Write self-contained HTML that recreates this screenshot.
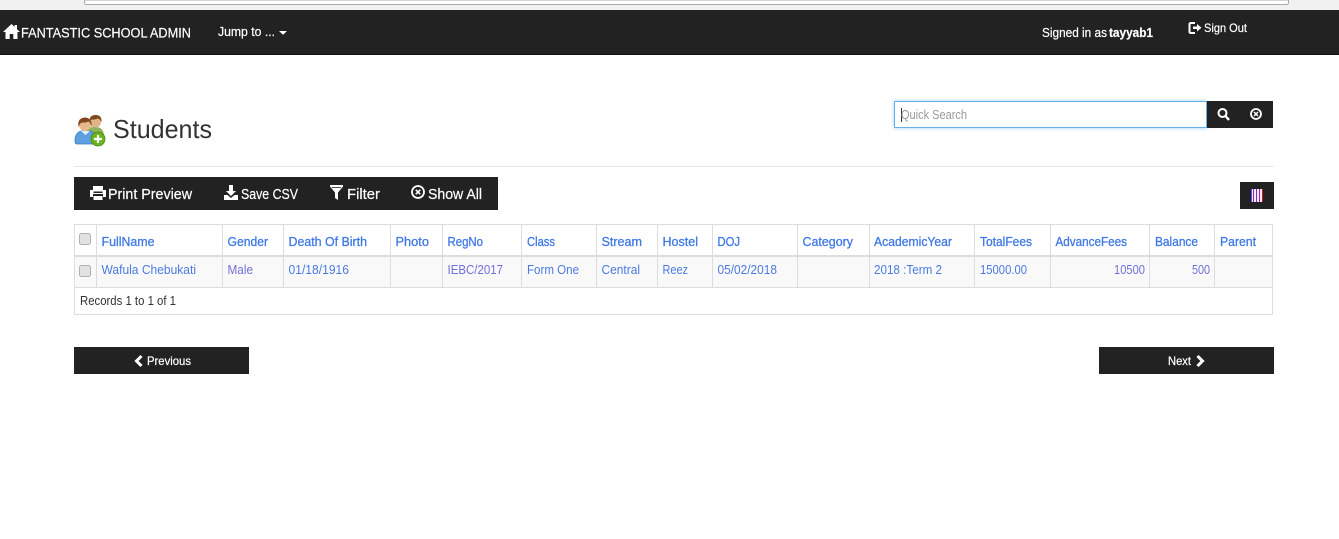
<!DOCTYPE html>
<html lang="en">
<head>
<meta charset="utf-8">
<title>Students</title>
<style>
html,body{margin:0;padding:0;background:#fff;width:1339px;height:539px;overflow:hidden}
svg{display:block}
text{font-family:"Liberation Sans",Arial,sans-serif}
.w{fill:#fff;stroke:#fff;stroke-width:.2px}
.th{fill:#3f78e6;stroke:#3f78e6;stroke-width:.3px;font-size:13px}
.td{fill:#4a7ae0;font-size:12.5px}
.tdv{fill:#6f6fd8;font-size:12.5px}
.ln{stroke:#ddd;stroke-width:1}
</style>
</head>
<body>
<svg width="1339" height="539" viewBox="0 0 1339 539" xmlns="http://www.w3.org/2000/svg">
<!-- browser strip -->
<rect width="1339" height="10" fill="#f1f1f1"/>
<path d="M84.500 0v2.500q0 2 2 2H1286.500q2 0 2-2V0z" fill="#fff" stroke="#aaa"/>
<!-- navbar -->
<rect y="10" width="1339" height="45" fill="#222"/>
<rect y="54" width="1339" height="1" fill="#111"/>
<path d="M11.500 24L3 32h2.500v7h4.200v-5h3.600v5h4.200v-7H20l-3-2.800V25h-2.400v1.900z" fill="#fff"/>
<text class="w" x="21" y="37.500" font-size="14" textLength="170" lengthAdjust="spacingAndGlyphs">FANTASTIC SCHOOL ADMIN</text>
<text class="w" x="218" y="36" font-size="13" textLength="57" lengthAdjust="spacingAndGlyphs">Jump to ...</text>
<path d="M279 31h8l-4 3.800z" fill="#fff"/>
<text class="w" x="1042" y="37" font-size="13" textLength="65" lengthAdjust="spacingAndGlyphs">Signed in as</text>
<text class="w" x="1109" y="37" font-size="13" font-weight="bold" textLength="44" lengthAdjust="spacingAndGlyphs">tayyab1</text>
<path d="M1195 23h-4q-1.500 0-1.500 1.500v7q0 1.500 1.500 1.500h4" fill="none" stroke="#fff" stroke-width="2"/>
<path d="M1193 26.500h4V24l4.500 3.800-4.500 3.700v-2.500h-4z" fill="#fff"/>
<text class="w" x="1204" y="32" font-size="12" textLength="43" lengthAdjust="spacingAndGlyphs">Sign Out</text>

<!-- heading icon -->
<g>
<path d="M84 136q1-9 9-9h3q7 0 8 8v5H88z" fill="#8fb35a"/>
<circle cx="95.500" cy="122" r="5.500" fill="#e0b488"/>
<path d="M89.500 122q-.5-7 6-7t6 7q-2-3.500-4-3.500-3 1.500-6 1-1.500 1-2 2.500z" fill="#7d4a1e"/>
<path d="M75 141q0-9 7-10h7q8 1 8 10 0 3-2 3H77q-2 0-2-3z" fill="#5d9fe0" stroke="#3a78bd" stroke-width=".8"/>
<path d="M81 131l4.500 4 4.500-4z" fill="#dff0ff"/>
<circle cx="85" cy="125" r="6" fill="#e6b98d"/>
<path d="M78.500 127q-1.500-9 6.500-9.500 7.500.5 6.500 9.500-1-4.500-3-5.500-3 1.500-7 1-2 1.500-3 4.500z" fill="#80481c"/>
<circle cx="98" cy="139" r="7" fill="#6cb31f" stroke="#4b8a12" stroke-width=".8"/>
<path d="M94 139h8M98 135v8" stroke="#fff" stroke-width="2.200"/>
</g>
<text x="113" y="138" font-size="26" fill="#333" textLength="99" lengthAdjust="spacingAndGlyphs">Students</text>

<!-- search -->
<rect x="894.500" y="101.500" width="312" height="26" fill="#fff" stroke="#66afe9" style="filter:drop-shadow(0 0 2px rgba(102,175,233,.6))"/>
<rect x="901" y="108" width="1" height="14" fill="#333"/>
<text x="901" y="119" font-size="12.500" fill="#999" textLength="66" lengthAdjust="spacingAndGlyphs">Quick Search</text>
<rect x="1207" y="101" width="66" height="27" fill="#222"/>
<circle cx="1222.500" cy="113" r="4" fill="none" stroke="#fff" stroke-width="2"/>
<path d="M1225.500 116l3.500 4" stroke="#fff" stroke-width="2.400"/>
<circle cx="1256" cy="114" r="5" fill="none" stroke="#fff" stroke-width="1.800"/>
<path d="M1254 112l4 4M1258 112l-4 4" stroke="#fff" stroke-width="1.500"/>

<rect x="74" y="166" width="1200" height="1" fill="#e6e6e6"/>

<!-- toolbar -->
<rect x="74" y="177" width="424" height="33" fill="#222"/>
<path d="M93 186h10v4h3v7h-3v-3H93v3h-3v-7h3z" fill="#fff"/>
<path d="M93.500 196h9v4h-9z" fill="#fff"/>
<rect x="93.500" y="191.500" width="9" height="1.500" fill="#222"/>
<text class="w" x="108" y="199" font-size="15" textLength="84" lengthAdjust="spacingAndGlyphs">Print Preview</text>
<path d="M229 185h4v6h3l-5 5-5-5h3z" fill="#fff"/>
<path d="M224 195h3.500l3.500 3 3.500-3h3.500v5h-14z" fill="#fff"/>
<text class="w" x="241" y="199" font-size="15" textLength="57" lengthAdjust="spacingAndGlyphs">Save CSV</text>
<path d="M330 185h13v1.500l-5 6v7.500l-3-2v-5.500l-5-6z" fill="#fff"/>
<path d="M332 187.500h9" stroke="#222" stroke-width=".8"/>
<text class="w" x="347" y="199" font-size="15" textLength="33" lengthAdjust="spacingAndGlyphs">Filter</text>
<circle cx="418" cy="192" r="6" fill="none" stroke="#fff" stroke-width="1.800"/>
<path d="M415.800 189.800l4.400 4.400M420.200 189.800l-4.400 4.400" stroke="#fff" stroke-width="1.600"/>
<text class="w" x="428" y="199" font-size="15" textLength="54" lengthAdjust="spacingAndGlyphs">Show All</text>

<!-- columns button -->
<rect x="1240" y="182" width="34" height="27" fill="#222"/>
<rect x="1251" y="189" width="12" height="13" fill="#f4e6fa"/>
<rect x="1251" y="189" width="1" height="13" fill="#4a4af0"/>
<rect x="1253" y="189" width="1" height="13" fill="#8a2aa8"/>
<rect x="1256" y="189" width="1" height="13" fill="#8a2aa8"/>
<rect x="1259" y="189" width="1" height="13" fill="#8a2aa8"/>
<rect x="1262" y="189" width="1" height="13" fill="#c02020"/>

<!-- table -->
<rect x="74.500" y="224.500" width="1198" height="90" fill="#fff" stroke="#ddd"/>
<rect x="75" y="257" width="1197" height="30" fill="#f9f9f9"/>
<rect x="75" y="255" width="1197" height="2" fill="#ddd"/>
<rect x="75" y="287" width="1197" height="1" fill="#ddd"/>
<path class="ln" d="M96.500 225V287M222.500 225V287M283.500 225V287M390.500 225V287M442.500 225V287M521.500 225V287M596.500 225V287M657.500 225V287M712.500 225V287M797.500 225V287M869.500 225V287M974.500 225V287M1050.500 225V287M1149.500 225V287M1214.500 225V287"/>

<rect x="79.500" y="233.500" width="11" height="11" rx="2" fill="#e2e2e2" stroke="#b0b0b0"/>
<rect x="79.500" y="265.500" width="11" height="11" rx="2" fill="#e2e2e2" stroke="#b0b0b0"/>

<text class="th" x="101.500" y="246" textLength="53" lengthAdjust="spacingAndGlyphs">FullName</text>
<text class="th" x="227.500" y="246" textLength="40.500" lengthAdjust="spacingAndGlyphs">Gender</text>
<text class="th" x="288.500" y="246" textLength="78.500" lengthAdjust="spacingAndGlyphs">Death Of Birth</text>
<text class="th" x="395.500" y="246" textLength="33.500" lengthAdjust="spacingAndGlyphs">Photo</text>
<text class="th" x="447.500" y="246" textLength="35.500" lengthAdjust="spacingAndGlyphs">RegNo</text>
<text class="th" x="527" y="246" textLength="28" lengthAdjust="spacingAndGlyphs">Class</text>
<text class="th" x="601.500" y="246" textLength="40.500" lengthAdjust="spacingAndGlyphs">Stream</text>
<text class="th" x="662.500" y="246" textLength="35.500" lengthAdjust="spacingAndGlyphs">Hostel</text>
<text class="th" x="717.500" y="246" textLength="22.500" lengthAdjust="spacingAndGlyphs">DOJ</text>
<text class="th" x="802.500" y="246" textLength="50.500" lengthAdjust="spacingAndGlyphs">Category</text>
<text class="th" x="874" y="246" textLength="78" lengthAdjust="spacingAndGlyphs">AcademicYear</text>
<text class="th" x="980" y="246" textLength="52" lengthAdjust="spacingAndGlyphs">TotalFees</text>
<text class="th" x="1055.500" y="246" textLength="71.500" lengthAdjust="spacingAndGlyphs">AdvanceFees</text>
<text class="th" x="1155" y="246" textLength="43" lengthAdjust="spacingAndGlyphs">Balance</text>
<text class="th" x="1220" y="246" textLength="36" lengthAdjust="spacingAndGlyphs">Parent</text>

<text class="td" x="101.500" y="274" textLength="94.500" lengthAdjust="spacingAndGlyphs">Wafula Chebukati</text>
<text class="tdv" x="227.500" y="274" textLength="25.500" lengthAdjust="spacingAndGlyphs">Male</text>
<text class="td" x="288.500" y="274" textLength="60.500" lengthAdjust="spacingAndGlyphs">01/18/1916</text>
<text class="tdv" x="447.500" y="274" textLength="55.500" lengthAdjust="spacingAndGlyphs">IEBC/2017</text>
<text class="td" x="527" y="274" textLength="52" lengthAdjust="spacingAndGlyphs">Form One</text>
<text class="td" x="601.500" y="274" textLength="38.500" lengthAdjust="spacingAndGlyphs">Central</text>
<text class="td" x="662.500" y="274" textLength="25.500" lengthAdjust="spacingAndGlyphs">Reez</text>
<text class="td" x="717.500" y="274" textLength="59.500" lengthAdjust="spacingAndGlyphs">05/02/2018</text>
<text class="td" x="874" y="274" textLength="68" lengthAdjust="spacingAndGlyphs">2018 :Term 2</text>
<text class="td" x="980" y="274" textLength="47" lengthAdjust="spacingAndGlyphs">15000.00</text>
<text class="tdv" x="1114" y="274" textLength="31" lengthAdjust="spacingAndGlyphs">10500</text>
<text class="tdv" x="1192" y="274" textLength="18" lengthAdjust="spacingAndGlyphs">500</text>

<text x="80" y="305" font-size="12.500" fill="#333" textLength="96" lengthAdjust="spacingAndGlyphs">Records 1 to 1 of 1</text>

<!-- pager -->
<rect x="74" y="347" width="175" height="27" fill="#222"/>
<path d="M141.500 356l-5 5 5 5" fill="none" stroke="#fff" stroke-width="3"/>
<text class="w" x="147" y="365" font-size="12" textLength="44" lengthAdjust="spacingAndGlyphs">Previous</text>
<rect x="1099" y="347" width="175" height="27" fill="#222"/>
<text class="w" x="1168" y="365" font-size="12" textLength="23" lengthAdjust="spacingAndGlyphs">Next</text>
<path d="M1197.500 356l5 5-5 5" fill="none" stroke="#fff" stroke-width="3"/>
</svg>
</body>
</html>
